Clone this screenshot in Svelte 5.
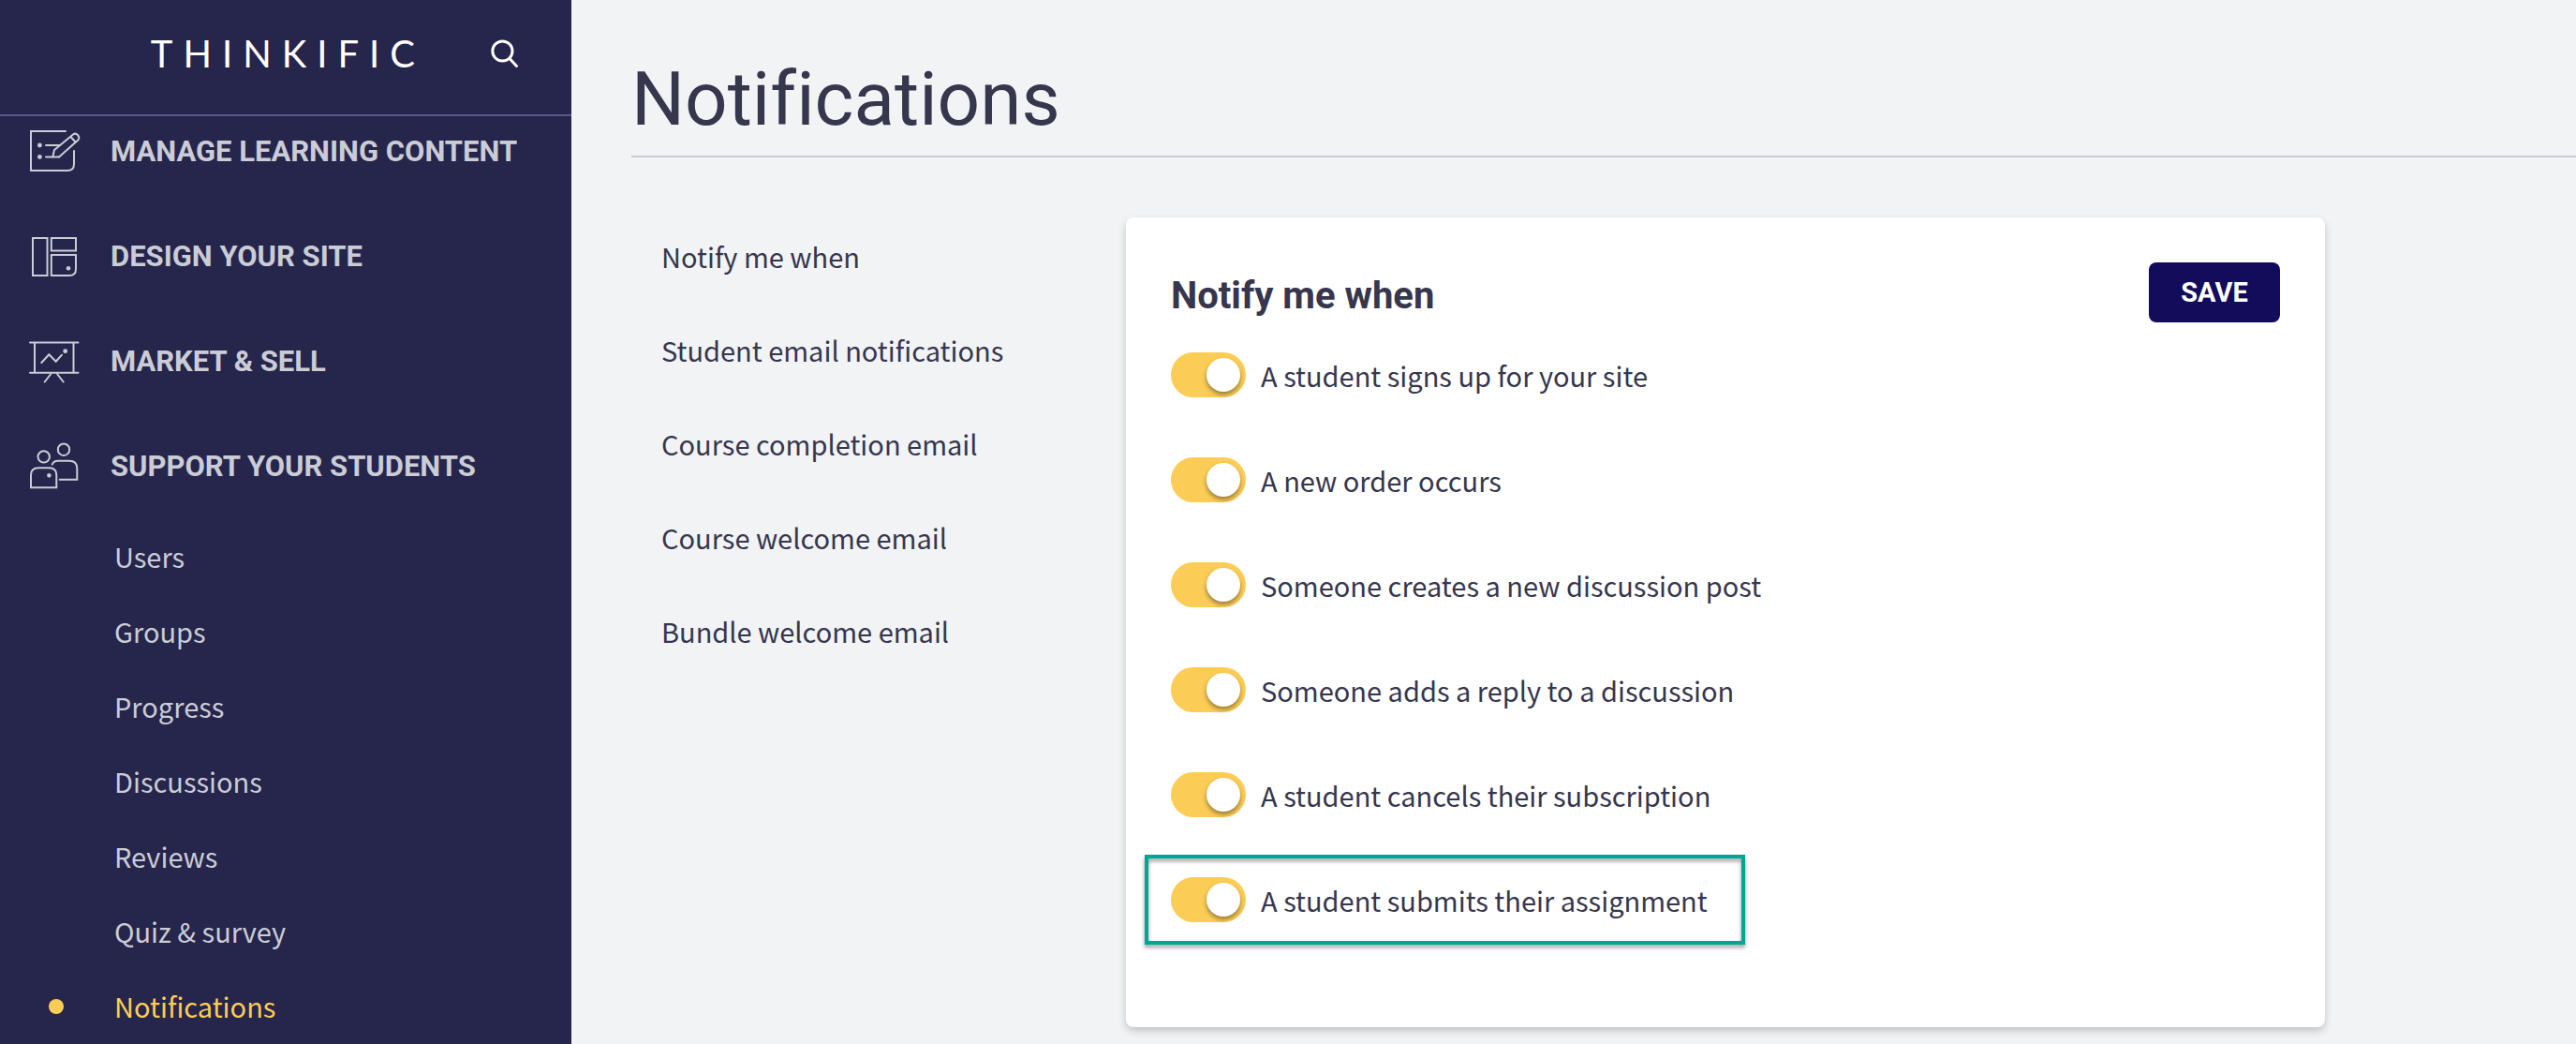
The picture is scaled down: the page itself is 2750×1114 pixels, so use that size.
<svelte:head>
    <title>Notifications</title>
</svelte:head>

<script lang="ts">
    const sections: { name: string, icon: string }[] = [
        { name: "Manage learning content", icon: "content" },
        { name: "Design your site", icon: "design" },
        { name: "Market & sell", icon: "market" },
        { name: "Support your students", icon: "support" },
    ];

    const supportLinks: string[] = [
        "Users",
        "Groups",
        "Progress",
        "Discussions",
        "Reviews",
        "Quiz & survey",
        "Notifications",
    ];
    const currentLink = "Notifications";

    const tabs: string[] = [
        "Notify me when",
        "Student email notifications",
        "Course completion email",
        "Course welcome email",
        "Bundle welcome email",
    ];

    let settings = $state([
        { id: "signup", label: "A student signs up for your site", on: true },
        { id: "order", label: "A new order occurs", on: true },
        { id: "post", label: "Someone creates a new discussion post", on: true },
        { id: "reply", label: "Someone adds a reply to a discussion", on: true },
        { id: "cancel", label: "A student cancels their subscription", on: true },
        { id: "assignment", label: "A student submits their assignment", on: true, highlight: true },
    ]);
</script>

<div class="app">
    <aside class="sidebar">
        <header class="brand">
            <a class="logo" href="/">THINKIFIC</a>
            <button class="search" type="button" aria-label="Search">
                <svg viewBox="0 0 32 32" aria-hidden="true">
                    <circle cx="14.4" cy="13.5" r="10.6" />
                    <path d="M22 21.5L29.5 29.5" />
                </svg>
            </button>
        </header>
        <nav>
            <ul class="sections">
                {#each sections as section}
                    <li>
                        <a href="#{section.icon}">
                            <svg class="icon" viewBox="0 0 56 56" aria-hidden="true">
                                {#if section.icon === "content"}
                                    <path d="M40 6H3V48H42Q49 48 49 41V27" />
                                    <path d="M19 21H34M33 33.5H19" />
                                    <path d="M26.3 33.5L28 26L48 9.5Q50.5 7.5 53 10Q55.5 13 53.3 15.5L33 33.5" />
                                    <path d="M45.5 12L50.5 17.5" />
                                    <circle class="dot" cx="12.4" cy="21" r="2.4" />
                                    <circle class="dot" cx="12.4" cy="33.4" r="2.4" />
                                {:else if section.icon === "design"}
                                    <path d="M5 8H20.5V48H5Z" />
                                    <path d="M24.8 8H51V21.5H24.8Z" />
                                    <path d="M24.8 26H51V41Q51 48 44 48H24.8Z" />
                                    <circle class="dot" cx="43" cy="40.3" r="2.3" />
                                {:else if section.icon === "market"}
                                    <path d="M2 7.5H53.5M2 39.7H53.5M7 7.5V39.7M48.5 7.5V39.7" />
                                    <path d="M14.3 29L22.3 20.3L29.7 27.7L36 20.7" />
                                    <path d="M24.3 41L17.7 49.5M31 41L37.7 49.5" />
                                    <circle class="dot" cx="39.7" cy="16.7" r="2.4" />
                                {:else}
                                    <circle cx="16.7" cy="17.4" r="6.2" />
                                    <circle cx="38" cy="9.7" r="6.2" />
                                    <path d="M3 50.3V37Q3 29.3 11 29.3H22.5Q30.3 29.3 30.3 37V50.3Z" />
                                    <path d="M25.7 25.5Q27.5 21.7 31.5 21.7H44Q52.3 21.7 52.3 30V41.7H33.7" />
                                    <circle class="dot" cx="22.4" cy="37.3" r="2.2" />
                                {/if}
                            </svg>
                            <span>{section.name}</span>
                        </a>
                    </li>
                {/each}
            </ul>
            <ul class="links">
                {#each supportLinks as link}
                    <li>
                        <a href="#{link}" class:current={link === currentLink}>{link}</a>
                    </li>
                {/each}
            </ul>
        </nav>
    </aside>

    <main>
        <h1>Notifications</h1>
        <div class="content">
            <ul class="tabs">
                {#each tabs as tab}
                    <li><a href="#{tab}">{tab}</a></li>
                {/each}
            </ul>
            <form class="card">
                <div class="card-head">
                    <h2>Notify me when</h2>
                    <button class="save" type="button">SAVE</button>
                </div>
                <ul class="settings">
                    {#each settings as setting}
                        <li>
                            <label for={setting.id} class:highlight={setting.highlight}>
                                <input id={setting.id} type="checkbox" bind:checked={setting.on}>
                                {setting.label}
                            </label>
                        </li>
                    {/each}
                </ul>
            </form>
        </div>
    </main>
</div>

<style>
    :global(body) {
        background-color: #f1f3f5;
    }

    .app {
        display: flex;
        min-height: 100vh;
        color: #36364d;
        font-family: "Noto Sans CJK SC", "Open Sans", sans-serif;
        font-size: 29px;
        line-height: 40px;
    }

    ul {
        list-style: none;
        margin: 0;
        padding: 0;
    }

    a {
        color: inherit;
        text-decoration: none;
    }

    button {
        border: none;
        cursor: pointer;
    }

    .sidebar {
        flex: 0 0 610px;
        background-color: #26254c;
        color: #caccd6;
    }

    .brand {
        display: flex;
        align-items: center;
        justify-content: flex-end;
        gap: 68px;
        height: 114px;
        padding: 0 56px 8px;
        border-bottom: 2px solid #555a8f;
    }

    .logo {
        color: white;
        font-family: Lato, sans-serif;
        font-size: 40px;
        letter-spacing: 11px;
    }

    .search {
        display: flex;
        padding: 0;
        background: none;
    }

    .search svg {
        width: 32px;
        height: 32px;
        fill: none;
        stroke: white;
        stroke-width: 3;
        stroke-linecap: round;
    }

    .sections {
        display: flex;
        flex-direction: column;
        gap: 64px;
        padding: 14px 0 32px 30px;
    }

    .sections a {
        display: flex;
        align-items: center;
        gap: 32px;
        height: 48px;
        font-family: Roboto, sans-serif;
        font-size: 31px;
        font-weight: bold;
        text-transform: uppercase;
    }

    .icon {
        flex: none;
        width: 56px;
        height: 56px;
        fill: none;
        stroke: currentColor;
        stroke-width: 2;
        stroke-linecap: round;
    }

    .dot {
        fill: currentColor;
        stroke: none;
    }

    .links a {
        position: relative;
        display: block;
        padding: 19px 0 21px 122px;
    }

    .links .current {
        color: #fccd56;
    }

    .current::before {
        content: "";
        position: absolute;
        left: 52px;
        top: 32px;
        width: 16px;
        height: 16px;
        border-radius: 50%;
        background-color: #fccd56;
    }

    main {
        flex: 1;
        min-width: 0;
        padding: 58px 0 16px 64px;
    }

    h1 {
        margin: 0;
        padding-bottom: 12px;
        border-bottom: 2px solid #c9ccd5;
        font-family: Roboto, sans-serif;
        font-size: 80px;
        font-weight: normal;
        font-variant-ligatures: none;
        line-height: 96px;
    }

    .content {
        display: flex;
        padding-top: 64px;
    }

    .tabs {
        display: flex;
        flex: 0 0 496px;
        flex-direction: column;
        gap: 60px;
        padding: 21px 0 0 32px;
    }

    .card {
        box-sizing: border-box;
        flex: 0 1 1280px;
        padding: 48px;
        border-radius: 8px;
        background-color: white;
        box-shadow: 0 4px 8px rgba(0, 0, 0, 0.2);
    }

    .card-head {
        display: flex;
        align-items: flex-start;
        justify-content: space-between;
        margin-bottom: 24px;
    }

    h2 {
        margin: 0;
        font-family: Roboto, sans-serif;
        font-size: 40px;
        font-weight: bold;
        line-height: 72px;
    }

    .save {
        width: 140px;
        height: 64px;
        border-radius: 8px;
        background-color: #120c5a;
        color: white;
        font-family: Roboto, sans-serif;
        font-size: 29px;
        font-weight: bold;
    }

    .settings li {
        display: flex;
        margin-bottom: 64px;
    }

    label {
        position: relative;
        display: flex;
        align-items: center;
        gap: 16px;
        height: 48px;
    }

    input {
        position: relative;
        flex: none;
        appearance: none;
        width: 80px;
        height: 48px;
        margin: 0;
        border-radius: 24px;
        background-color: #c9ccd5;
        cursor: pointer;
    }

    input::before {
        content: "";
        position: absolute;
        top: 6px;
        left: 6px;
        width: 36px;
        height: 36px;
        border-radius: 50%;
        background-color: white;
        box-shadow: 0 3px 5px rgba(0, 0, 0, 0.4);
    }

    input:checked {
        background-color: #fccd56;
    }

    input:checked::before {
        left: 38px;
    }

    .highlight::after {
        content: "";
        position: absolute;
        inset: -24px -40px -24px -28px;
        border: 4px solid #00a693;
        filter: drop-shadow(0 3px 2px rgba(0, 0, 0, 0.4));
        pointer-events: none;
    }
</style>
